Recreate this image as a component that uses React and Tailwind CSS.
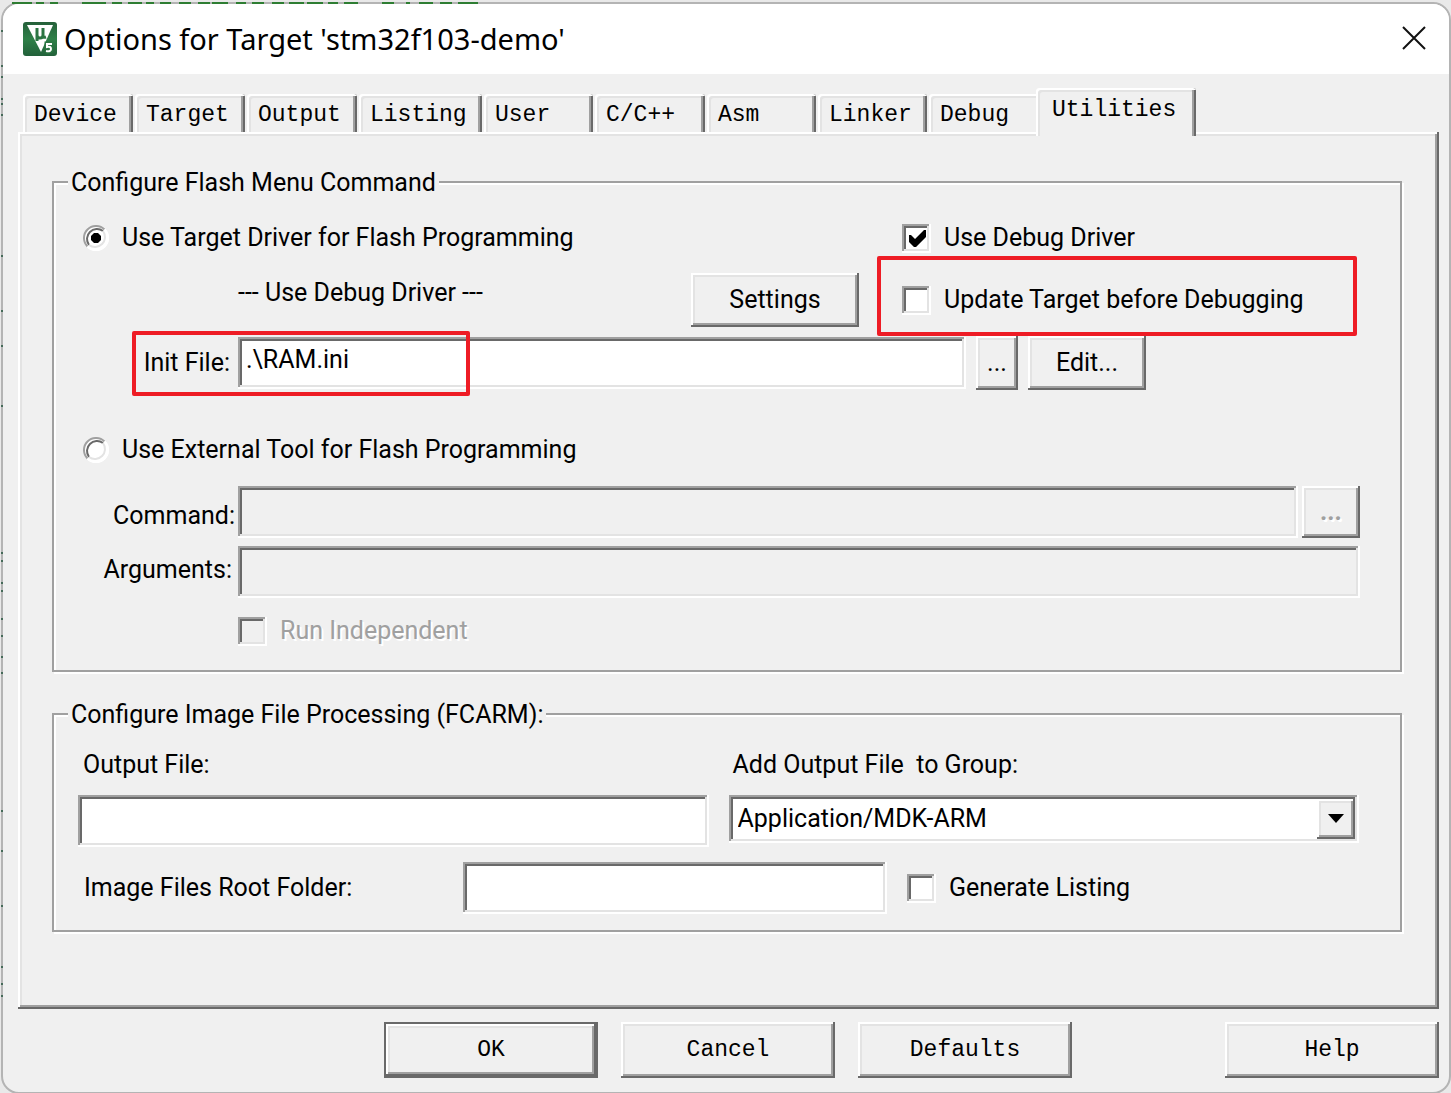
const RAISED = "shadow-[inset_-2px_-2px_#696969,inset_2px_2px_#fff,inset_-4px_-4px_#a0a0a0,inset_4px_4px_#e3e3e3]";
const SUNKEN = "shadow-[inset_-2px_-2px_#fff,inset_2px_2px_#a0a0a0,inset_-4px_-4px_#e3e3e3,inset_4px_4px_#696969]";
const MONO = "font-['Liberation_Mono',monospace] text-[23px]";

const TABS = [
  ["Device", "w-[110px]"],
  ["Target", "w-[110px]"],
  ["Output", "w-[110px]"],
  ["Listing", "w-[123px]"],
  ["User", "w-[109px]"],
  ["C/C++", "w-[110px]"],
  ["Asm", "w-[109px]"],
  ["Linker", "w-[109px]"],
];

const DASHES = [
  [12, 20], [36, 8], [50, 8], [82, 24], [112, 10], [128, 14], [146, 8], [160, 11], [179, 12], [198, 12],
  [212, 16], [236, 10], [252, 12], [272, 12], [289, 15], [307, 16], [328, 10], [344, 14], [382, 12], [406, 4], [419, 14], [440, 12], [458, 20],
];

const MARKS = [30, 65, 76, 98, 103, 114, 255, 310, 345, 405, 552, 560, 582, 590, 618, 635, 656, 672, 810, 850, 905, 966, 983, 995];

function Button({ children, className = "", ...rest }) {
  return (
    <button type="button" className={`bg-[#f0f0f0] ${RAISED} ${className}`} {...rest}>
      {children}
    </button>
  );
}

function TextField({ className = "", ...rest }) {
  return (
    <input
      type="text"
      className={`h-[52px] min-w-0 bg-white px-2 pb-2 outline-none disabled:bg-[#f0f0f0] ${SUNKEN} ${className}`}
      {...rest}
    />
  );
}

function Check({ label, checked, disabled }) {
  return (
    <label className={`flex h-[30px] items-center gap-[13px] whitespace-nowrap ${disabled ? "text-[#a0a0a0] [text-shadow:2px_2px_#fff]" : ""}`}>
      <span className="relative flex size-[29px]">
        <input
          type="checkbox"
          defaultChecked={checked}
          disabled={disabled}
          className={`peer size-[29px] appearance-none bg-white disabled:bg-[#f0f0f0] ${SUNKEN}`}
        />
        <svg viewBox="0 0 29 29" className="pointer-events-none absolute inset-0 hidden peer-checked:block">
          <path d="M7 11 H9 L13 15 L22 6 H24 V13 L14 23 H12 L7 18 Z" fill="#000" />
        </svg>
      </span>
      {label}
    </label>
  );
}

function Radio({ label, checked }) {
  return (
    <label className="flex h-[30px] items-center gap-[13px] whitespace-nowrap">
      <span className="relative flex size-[26px]">
        <input type="radio" name="driver" defaultChecked={checked} className="peer size-[26px] appearance-none rounded-full bg-white" />
        <svg viewBox="0 0 26 26" fill="none" strokeWidth="2" className="pointer-events-none absolute inset-0">
          <path d="M21.500 4.500 A12 12 0 0 0 4.500 21.500" stroke="#a0a0a0" />
          <path d="M20 6 A10 10 0 0 0 6 20" stroke="#696969" />
          <path d="M20 6 A10 10 0 0 1 6 20" stroke="#e3e3e3" />
          <path d="M21.500 4.500 A12 12 0 0 1 4.500 21.500" stroke="#fff" />
        </svg>
        <svg viewBox="0 0 26 26" className="pointer-events-none absolute inset-0 hidden peer-checked:block">
          <path d="M11 8 H15 L18 11 V15 L15 18 H11 L8 15 V11 Z" fill="#000" />
        </svg>
      </span>
      {label}
    </label>
  );
}

function Group({ title, children, className = "" }) {
  return (
    <fieldset className={`min-w-0 border-2 border-[#a0a0a0] shadow-[2px_2px_#fff,inset_2px_2px_#fff] ${className}`}>
      <legend className="ml-[14px] h-[30px] bg-[#f0f0f0] px-[3px] leading-[32px]">{title}</legend>
      {children}
    </fieldset>
  );
}

function Logo() {
  return (
    <svg viewBox="0 0 34 34" className="size-[34px]" aria-hidden="true">
      <defs>
        <linearGradient id="logo-green" x1="0" y1="0" x2="0" y2="1">
          <stop offset="0" stopColor="#25603a" />
          <stop offset="0.5" stopColor="#2f8048" />
          <stop offset="1" stopColor="#22613a" />
        </linearGradient>
      </defs>
      <rect width="34" height="34" rx="3" fill="url(#logo-green)" />
      <path d="M4 3 H30 L18 30 Z" fill="#fff" />
      <path d="M14 6 V19 M14 6 V13 Q14 16 17 16 Q20 16 20 13 V6 M20 13 Q20 16 23 15" fill="none" stroke="#2b7542" strokeWidth="3" />
      <path d="M29 22 H24 V25 Q28 24 28 27 Q28 30 23 29" fill="none" stroke="#2b7542" strokeWidth="5" />
      <path d="M29 22 H24 V25 Q28 24 28 27 Q28 30 23 29" fill="none" stroke="#fff" strokeWidth="2" />
    </svg>
  );
}

export default function App() {
  return (
    <div className="relative min-h-screen bg-[#e9e9e9] pl-px pt-[2px] font-[Roboto,sans-serif] text-[25px] text-black">
      <main className="min-h-[1091px] overflow-hidden rounded-[18px] border-2 border-[#b4b4b4] bg-[#f0f0f0] pb-[14px]">
        <header className="flex h-[70px] items-center bg-white pl-[20px] pr-[22px]">
          <Logo />
          <h1 className="ml-[7px] flex-1 font-['Noto_Sans',sans-serif] text-[29px] leading-[36px]">Options for Target 'stm32f103-demo'</h1>
          <button type="button" aria-label="Close" className="size-[26px]">
            <svg viewBox="0 0 26 26" stroke="#111" strokeWidth="2">
              <path d="M2 1 L24 23 M24 1 L2 23" />
            </svg>
          </button>
        </header>

        <nav role="tablist" className={`mt-[14px] flex h-[44px] items-end pl-[20px] ${MONO}`}>
          {TABS.map(([name, width]) => (
            <button
              key={name}
              type="button"
              role="tab"
              className={`mr-[2px] h-[38px] rounded-t-[3px] pl-[11px] pt-[4px] text-left shadow-[inset_2px_2px_#fff,inset_-2px_0_#696969,inset_-4px_0_#a0a0a0,inset_4px_4px_#e3e3e3] ${width}`}
            >
              {name}
            </button>
          ))}
          <button type="button" role="tab" className="h-[38px] w-[107px] rounded-tl-[3px] pl-[11px] pt-[4px] text-left shadow-[inset_2px_2px_#fff,inset_4px_4px_#e3e3e3]">
            Debug
          </button>
          <button
            type="button"
            role="tab"
            aria-selected="true"
            className="relative z-10 -mb-[4px] h-[48px] w-[160px] rounded-t-[3px] bg-[#f0f0f0] pb-[4px] pl-[16px] text-left shadow-[inset_2px_2px_#fff,inset_-2px_0_#696969,inset_-4px_0_#a0a0a0,inset_4px_4px_#e3e3e3]"
          >
            Utilities
          </button>
        </nav>

        <section className={`ml-[15px] mr-[10px] pb-[77px] pl-[34px] pr-[37px] pt-[35px] ${RAISED}`}>
          <Group title="Configure Flash Menu Command" className="pb-[24px]">
            <div className="mt-[26px] grid grid-cols-[1fr_498px] pl-[29px]">
              <Radio label="Use Target Driver for Flash Programming" checked />
              <Check label="Use Debug Driver" checked />
            </div>
            <div className="mt-[20px] grid grid-cols-[1fr_498px] pl-[184px]">
              <div className="flex justify-between pr-[43px]">
                <span className="leading-[40px]">--- Use Debug Driver ---</span>
                <Button className="h-[54px] w-[168px]">Settings</Button>
              </div>
              <div className="relative flex items-center">
                <Check label="Update Target before Debugging" />
                <div className="pointer-events-none absolute -left-[25px] -top-[17px] z-10 h-[80px] w-[480px] rounded-xs border-4 border-[#ee1c25]" />
              </div>
            </div>
            <div className="relative mt-[9px] flex items-center pr-[254px]">
              <label htmlFor="init" className="w-[184px] pr-[8px] text-right">Init File:</label>
              <TextField id="init" defaultValue=".\RAM.ini" className="flex-1" />
              <Button className="ml-[10px] h-[54px] w-[42px]">...</Button>
              <Button className="ml-[10px] h-[54px] w-[118px]">Edit...</Button>
              <div className="pointer-events-none absolute -top-[5px] left-[78px] h-[65px] w-[338px] rounded-xs border-4 border-[#ee1c25]" />
            </div>
            <div className="mt-[45px] pl-[29px]">
              <Radio label="Use External Tool for Flash Programming" />
            </div>
            <div className="mt-[21px] flex items-center pr-[40px]">
              <label htmlFor="command" className="w-[184px] pr-[3px] pt-[8px] text-right">Command:</label>
              <TextField id="command" disabled className="flex-1" />
              <Button disabled className="ml-[4px] h-[52px] w-[58px] font-bold text-[#a0a0a0] [text-shadow:2px_2px_#fff]">...</Button>
            </div>
            <div className="mt-[8px] flex items-center pr-[40px]">
              <label htmlFor="arguments" className="w-[184px] pb-[4px] pr-[6px] text-right">Arguments:</label>
              <TextField id="arguments" disabled className="flex-1" />
            </div>
            <div className="mt-[18px] pl-[184px]">
              <Check label="Run Independent" disabled />
            </div>
          </Group>

          <Group title="Configure Image File Processing (FCARM):" className="mt-[27px] pb-[16px]">
            <div className="mt-[21px] grid grid-cols-2 items-start gap-x-[20px] pl-[24px] pr-[41px]">
              <div className="flex flex-col gap-[15px]">
                <label htmlFor="output" className="h-[30px] pl-[5px] leading-[30px]">Output File:</label>
                <TextField id="output" />
              </div>
              <div className="flex flex-col gap-[15px]">
                <label htmlFor="group" className="h-[30px] whitespace-pre pl-[4px] leading-[30px]">{"Add Output File  to Group:"}</label>
                <div className="relative">
                  <select id="group" className={`h-[48px] w-full appearance-none bg-white pl-[9px] outline-none ${SUNKEN}`}>
                    <option>Application/MDK-ARM</option>
                  </select>
                  <span className={`pointer-events-none absolute bottom-[4px] right-[4px] top-[4px] flex w-[38px] items-center justify-center bg-[#f0f0f0] ${RAISED}`}>
                    <svg viewBox="0 0 16 10" className="w-[16px]"><path d="M0 0 H16 L8 9 Z" /></svg>
                  </span>
                </div>
              </div>
            </div>
            <div className="mt-[15px] flex items-center pl-[30px]">
              <label htmlFor="root" className="w-[379px]">Image Files Root Folder:</label>
              <TextField id="root" className="w-[424px]" />
              <div className="ml-[20px]">
                <Check label="Generate Listing" />
              </div>
            </div>
          </Group>
        </section>

        <footer className={`mt-[13px] flex gap-[23px] pl-[381px] pr-[10px] ${MONO}`}>
          <Button className="h-[56px] w-[214px] border-2 border-[#696969]">OK</Button>
          <Button className="h-[56px] w-[214px]">Cancel</Button>
          <Button className="h-[56px] w-[214px]">Defaults</Button>
          <Button className="ml-auto h-[56px] w-[214px]">Help</Button>
        </footer>
      </main>

      <svg className="pointer-events-none absolute left-0 top-0 h-[4px] w-[480px]" aria-hidden="true">
        {DASHES.map(([x, w]) => (
          <rect key={x} x={x} y="2" width={w} height="2" fill="#2e7d32" />
        ))}
      </svg>
      <svg className="pointer-events-none absolute left-0 top-0 h-[1000px] w-[3px]" aria-hidden="true">
        {MARKS.map((y) => (
          <rect key={y} x="1" y={y} width="2" height="2" fill="#456a58" />
        ))}
      </svg>
    </div>
  );
}
